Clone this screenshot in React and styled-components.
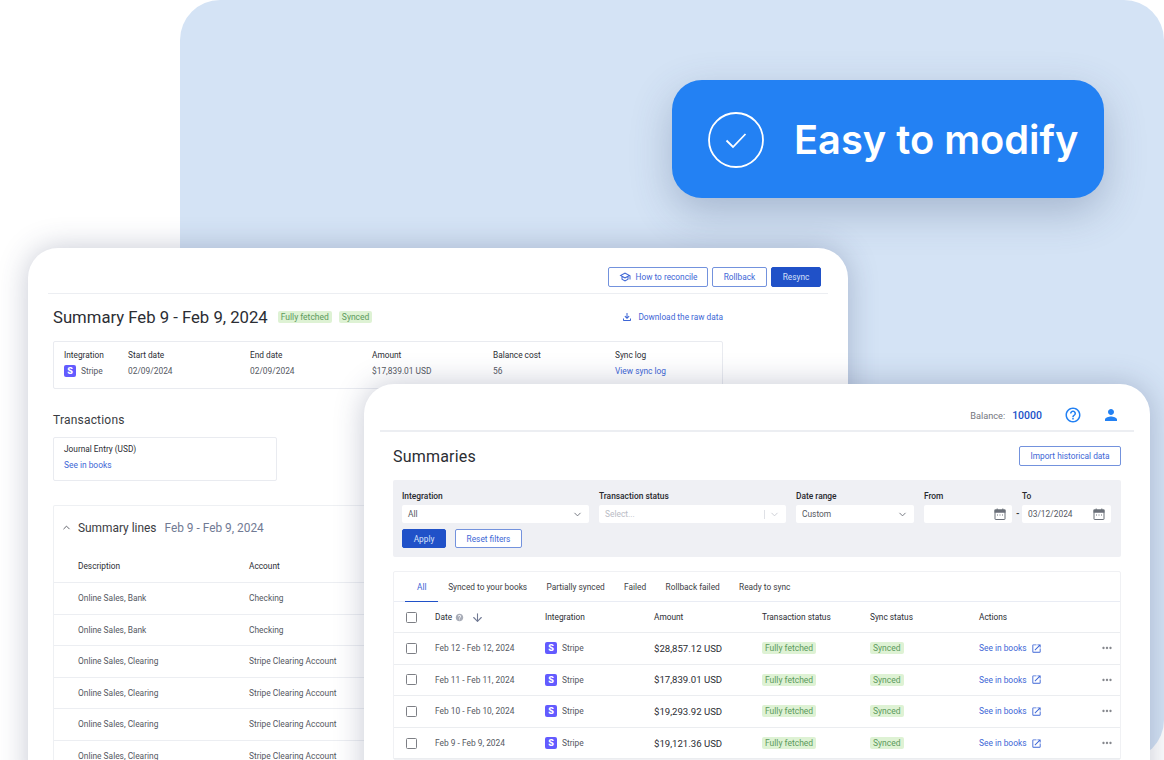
import React from 'react';
import styled, { createGlobalStyle } from 'styled-components';
import { ChevronDown, ChevronUp, ArrowDown } from 'lucide-react';
import { MdOutlineSchool, MdOutlineFileDownload, MdHelpOutline, MdPerson, MdOpenInNew, MdMoreHoriz, MdHelp } from 'react-icons/md';

const GlobalStyle = createGlobalStyle`
    html, body { margin: 0; padding: 0; background: #fff; }
    body { font-family: Roboto, "Liberation Sans", sans-serif; color: #2b2d33; }
    * { box-sizing: border-box; }
`;

const BLUE = '#2051c8';
const LINK = '#3d66d6';

const Canvas = styled.div`
    position: relative;
    width: 1164px;
    height: 760px;
    overflow: hidden;
`;

const Backdrop = styled.div`
    position: absolute;
    left: 180px;
    top: 0;
    width: 984px;
    height: 760px;
    background: #d4e3f5;
    border-radius: 40px;
`;

const Callout = styled.div`
    position: absolute;
    left: 672px;
    top: 80px;
    width: 432px;
    height: 118px;
    display: flex;
    align-items: center;
    gap: 30px;
    padding: 2px 0 0 36px;
    background: #2381f3;
    border-radius: 30px;
    color: #fff;
    font-family: Inter, sans-serif;
    font-size: 39.8px;
    font-weight: 600;
    box-shadow: 0 14px 40px rgba(60, 80, 120, 0.3);
`;

const CalloutText = styled.span`
    margin-top: -2px;
`;

const Window = styled.div`
    position: absolute;
    left: ${p => p.$left}px;
    top: ${p => p.$top}px;
    width: ${p => p.$width}px;
    height: 560px;
    background: #fff;
    border-radius: 30px;
    box-shadow: 0 0 30px rgba(50, 60, 100, 0.28);
`;

const TopBar = styled.div`
    height: ${p => p.$height}px;
    margin: 0 ${p => p.$margin}px;
    padding: 0 ${p => p.$pad}px ${p => p.$bottom}px 0;
    display: flex;
    align-items: flex-end;
    justify-content: flex-end;
    gap: 4px;
    border-bottom: ${p => p.$line}px solid #eceef2;
`;

const Button = styled.button`
    height: ${p => p.$h || 20}px;
    width: ${p => p.$w}px;
    display: inline-flex;
    align-items: center;
    justify-content: center;
    gap: 5px;
    padding: 0;
    font-family: inherit;
    font-size: 8.3px;
    color: ${p => (p.$primary ? '#d6e0fa' : LINK)};
    background: ${p => (p.$primary ? BLUE : '#fff')};
    border: 1px solid ${p => (p.$primary ? BLUE : '#7392dd')};
    border-radius: 2px;
`;

const BackBody = styled.div`
    padding: 13px 0 0 25px;
    width: 695px;
`;

const TitleRow = styled.div`
    display: flex;
    align-items: center;
    height: 20px;
    gap: 7px;
`;

const BackTitle = styled.h1`
    margin: 0 3px 0 0;
    font-size: 16.7px;
    font-weight: 400;
    color: #2b2d33;
    white-space: nowrap;
`;

const Tag = styled.span`
    display: inline-flex;
    align-items: center;
    height: 12px;
    padding: 0 3px;
    background: #def2d4;
    border-radius: 2px;
    color: #5c9a5c;
    font-size: 8.5px;
    white-space: nowrap;
`;

const TagCell = styled.span`
    display: flex;
    align-items: center;
`;

const RawLink = styled.a`
    margin-left: auto;
    display: inline-flex;
    align-items: center;
    gap: 5px;
    color: ${LINK};
    font-size: 8.3px;
`;

const InfoBox = styled.div`
    margin-top: 14px;
    height: 48px;
    padding: 7px 0 0 10px;
    border: 1px solid #e9ebf0;
    border-radius: 2px;
    display: grid;
    grid-template-columns: 64px 122px 122px 121px 122px 1fr;
    grid-template-rows: 12px 20px;
    align-items: center;
`;

const Label = styled.span`
    font-size: 8.3px;
    color: #2b2d33;
    white-space: nowrap;
`;

const Value = styled.span`
    display: inline-flex;
    align-items: center;
    gap: 5px;
    font-size: 8.4px;
    color: #55585f;
    white-space: nowrap;
`;

const Link = styled(Value)`
    color: ${LINK};
`;

const ActionLink = styled(Link)`
    gap: 4px;
`;

const StripeMark = styled.span`
    width: 12px;
    height: 12px;
    display: inline-flex;
    align-items: center;
    justify-content: center;
    background: #635bff;
    border-radius: 2px;
    color: #fff;
    font-size: 9px;
    font-weight: 900;
`;

const SectionTitle = styled.h2`
    margin: 24px 0 10px;
    font-size: 12px;
    line-height: 14px;
    font-weight: 400;
    color: #3a3c42;
    letter-spacing: 0.2px;
`;

const JournalBox = styled.div`
    width: 224px;
    height: 44px;
    padding: 6px 10px;
    display: flex;
    flex-direction: column;
    gap: 6px;
    border: 1px solid #e9ebf0;
    border-radius: 2px;
`;

const LinesBox = styled.div`
    margin-top: 24px;
    border: 1px solid #eef0f3;
    border-bottom: 0;
    border-radius: 2px;
`;

const LinesHead = styled.div`
    height: 43px;
    padding-left: 7px;
    display: flex;
    align-items: center;
    gap: 6px;
    font-size: 11.9px;
    color: #3a3c42;
`;

const LinesRange = styled.span`
    margin-left: 2px;
    color: #717a94;
`;

const LineRow = styled.div`
    height: ${p => (p.$head ? 34 : 31.5)}px;
    padding-left: 24px;
    display: grid;
    grid-template-columns: 171px 1fr;
    align-items: center;
    border-bottom: 1px solid #eceef2;
`;

const FrontBody = styled.div`
    padding: 0 29px;
`;

const Balance = styled.div`
    display: flex;
    align-items: center;
    width: 100%;
    height: 30px;
    justify-content: flex-end;
    font-size: 9.2px;
    color: #74777e;
`;

const BalanceValue = styled.span`
    margin: 0 22px 0 7px;
    color: ${BLUE};
    font-size: 10.5px;
    font-weight: 500;
`;

const UserIcon = styled(MdPerson)`
    margin: 0 14px 0 20px;
`;

const PageHead = styled.div`
    height: 48px;
    display: flex;
    align-items: center;
    justify-content: space-between;
`;

const PageTitle = styled.h1`
    margin: 0;
    font-size: 16px;
    font-weight: 400;
    color: #2b2d33;
    letter-spacing: 0.2px;
`;

const Filters = styled.div`
    height: 77px;
    padding: 10px 9px 0;
    background: #eff0f4;
    border-radius: 2px;
`;

const FilterRow = styled.div`
    display: grid;
    grid-template-columns: 187px 187px 118px 88px 89px;
    column-gap: 10px;
`;

const Field = styled.div`
    display: flex;
    flex-direction: column;
    gap: 3px;
`;

const FieldLabel = styled.span`
    height: 12px;
    font-size: 8.4px;
    font-weight: 500;
    line-height: 12px;
    color: #26282d;
    white-space: nowrap;
`;

const Input = styled.div`
    position: relative;
    height: 18px;
    padding: 0 6px;
    display: flex;
    align-items: center;
    justify-content: space-between;
    background: #fff;
    border-radius: 2px;
    font-size: 8.4px;
    color: ${p => (p.$placeholder ? '#b9bcc5' : '#55585f')};
`;

const Dash = styled.span`
    position: absolute;
    left: -6px;
    top: 3px;
    font-size: 9px;
    font-weight: 700;
    color: #33353a;
`;

const Divider = styled.span`
    width: 1px;
    height: 9px;
    margin-left: auto;
    margin-right: 4px;
    background: #dfe1e6;
`;

const FilterActions = styled.div`
    margin-top: 6px;
    display: flex;
    gap: 9px;
`;

const TableBox = styled.div`
    margin-top: 14px;
    border: 1px solid #f0f1f4;
    border-radius: 2px;
`;

const Tabs = styled.div`
    height: 30px;
    padding-left: 11px;
    display: flex;
    border-bottom: 1px solid #e9ecf4;
`;

const Tab = styled.span`
    height: 30px;
    padding: 0 ${p => p.$pad || 9.7}px;
    display: flex;
    align-items: center;
    font-size: 8.3px;
    color: ${p => (p.$active ? LINK : '#3c3e44')};
    border-bottom: ${p => (p.$active ? `1px solid ${BLUE}` : '0')};
    white-space: nowrap;
`;

const Row = styled.div`
    height: ${p => (p.$head ? 31 : 31.6)}px;
    padding-left: 12px;
    display: grid;
    grid-template-columns: 29px 110px 109px 108px 108px 109px 121px 1fr;
    align-items: center;
    border-bottom: 1px solid #ebedf0;
`;

const Checkbox = styled.span`
    width: 11px;
    height: 11px;
    border: 1px solid #7d7f85;
    border-radius: 1.5px;
    background: #fff;
`;

const Amount = styled.span`
    font-size: 9.6px;
    color: #2b2d33;
    white-space: nowrap;
`;

const HeadCell = styled(Label)`
    display: inline-flex;
    align-items: center;
    gap: 3px;
`;

const SortArrow = styled(ArrowDown)`
    margin-left: 4px;
`;

const Dots = styled(MdMoreHoriz)`
    color: #85878d;
`;

function Calendar() {
    return (
        <svg width="12" height="12" viewBox="0 0 12 12" fill="none" stroke="#6b7079">
            <rect x="1" y="2" width="10" height="9.5" rx="0.5" />
            <rect x="1" y="2" width="10" height="2.2" fill="#6b7079" />
            <path d="M3.2 .5v2M8.8 .5v2" />
            <path d="M3 7h1M5.5 7h1M8 7h1" />
        </svg>
    );
}

const summaryRows = [
    ['Feb 12 - Feb 12, 2024', '$28,857.12 USD'],
    ['Feb 11 - Feb 11, 2024', '$17,839.01 USD'],
    ['Feb 10 - Feb 10, 2024', '$19,293.92 USD'],
    ['Feb 9 - Feb 9, 2024', '$19,121.36 USD'],
];

const lineRows = [
    ['Online Sales, Bank', 'Checking'],
    ['Online Sales, Bank', 'Checking'],
    ['Online Sales, Clearing', 'Stripe Clearing Account'],
    ['Online Sales, Clearing', 'Stripe Clearing Account'],
    ['Online Sales, Clearing', 'Stripe Clearing Account'],
    ['Online Sales, Clearing', 'Stripe Clearing Account'],
];

const tabs = ['Synced to your books', 'Partially synced', 'Failed', 'Rollback failed', 'Ready to sync'];

export default function App() {
    return (
        <Canvas>
            <GlobalStyle />
            <Backdrop />
            <Callout>
                <svg width="56" height="56" viewBox="0 0 56 56" fill="none" stroke="#fff">
                    <circle cx="28" cy="28" r="27" strokeWidth="1.8" />
                    <path d="M18.5 28.5l6.5 6.5 12.5-13" strokeWidth="1.8" />
                </svg>
                <CalloutText>Easy to modify</CalloutText>
            </Callout>

            <Window $left={28} $top={248} $width={820}>
                <TopBar $height={46} $margin={20} $pad={7} $bottom={6} $line={1}>
                    <Button $w={100}><MdOutlineSchool size={12} />How to reconcile</Button>
                    <Button $w={55}>Rollback</Button>
                    <Button $w={50} $primary>Resync</Button>
                </TopBar>
                <BackBody>
                    <TitleRow>
                        <BackTitle>Summary Feb 9 - Feb 9, 2024</BackTitle>
                        <Tag>Fully fetched</Tag>
                        <Tag>Synced</Tag>
                        <RawLink><MdOutlineFileDownload size={12} />Download the raw data</RawLink>
                    </TitleRow>
                    <InfoBox>
                        <Label>Integration</Label>
                        <Label>Start date</Label>
                        <Label>End date</Label>
                        <Label>Amount</Label>
                        <Label>Balance cost</Label>
                        <Label>Sync log</Label>
                        <Value><StripeMark>S</StripeMark>Stripe</Value>
                        <Value>02/09/2024</Value>
                        <Value>02/09/2024</Value>
                        <Value>$17,839.01 USD</Value>
                        <Value>56</Value>
                        <Link>View sync log</Link>
                    </InfoBox>
                    <SectionTitle>Transactions</SectionTitle>
                    <JournalBox>
                        <Label>Journal Entry (USD)</Label>
                        <Link>See in books</Link>
                    </JournalBox>
                    <LinesBox>
                        <LinesHead>
                            <ChevronUp size={11} color="#55585f" />
                            Summary lines
                            <LinesRange>Feb 9 - Feb 9, 2024</LinesRange>
                        </LinesHead>
                        <LineRow $head>
                            <Label>Description</Label>
                            <Label>Account</Label>
                        </LineRow>
                        {lineRows.map((line, i) => (
                            <LineRow key={i}>
                                <Value>{line[0]}</Value>
                                <Value>{line[1]}</Value>
                            </LineRow>
                        ))}
                    </LinesBox>
                </BackBody>
            </Window>

            <Window $left={364} $top={384} $width={786}>
                <TopBar $height={48} $margin={16} $pad={0} $bottom={0} $line={2}>
                    <Balance>
                        Balance:
                        <BalanceValue>10000</BalanceValue>
                        <MdHelpOutline size={18} color="#2381f3" />
                        <UserIcon size={18} color="#2381f3" />
                    </Balance>
                </TopBar>
                <FrontBody>
                    <PageHead>
                        <PageTitle>Summaries</PageTitle>
                        <Button $w={102}>Import historical data</Button>
                    </PageHead>
                    <Filters>
                        <FilterRow>
                            <Field>
                                <FieldLabel>Integration</FieldLabel>
                                <Input>All<ChevronDown size={11} color="#6b7079" /></Input>
                            </Field>
                            <Field>
                                <FieldLabel>Transaction status</FieldLabel>
                                <Input $placeholder>Select...<Divider /><ChevronDown size={11} color="#c9ccd3" /></Input>
                            </Field>
                            <Field>
                                <FieldLabel>Date range</FieldLabel>
                                <Input>Custom<ChevronDown size={11} color="#6b7079" /></Input>
                            </Field>
                            <Field>
                                <FieldLabel>From</FieldLabel>
                                <Input><span /><Calendar /></Input>
                            </Field>
                            <Field>
                                <FieldLabel>To</FieldLabel>
                                <Input><Dash>-</Dash>03/12/2024<Calendar /></Input>
                            </Field>
                        </FilterRow>
                        <FilterActions>
                            <Button $w={44} $h={19} $primary>Apply</Button>
                            <Button $w={67} $h={19}>Reset filters</Button>
                        </FilterActions>
                    </Filters>
                    <TableBox>
                        <Tabs>
                            <Tab $active $pad={12}>All</Tab>
                            {tabs.map(t => <Tab key={t}>{t}</Tab>)}
                        </Tabs>
                        <Row $head>
                            <Checkbox />
                            <HeadCell>Date <MdHelp size={9} color="#a9adb8" /><SortArrow size={13} color="#717a94" /></HeadCell>
                            <Label>Integration</Label>
                            <Label>Amount</Label>
                            <Label>Transaction status</Label>
                            <Label>Sync status</Label>
                            <Label>Actions</Label>
                            <span />
                        </Row>
                        {summaryRows.map(row => (
                            <Row key={row[0]}>
                                <Checkbox />
                                <Value>{row[0]}</Value>
                                <Value><StripeMark>S</StripeMark>Stripe</Value>
                                <Amount>{row[1]}</Amount>
                                <TagCell><Tag>Fully fetched</Tag></TagCell>
                                <TagCell><Tag>Synced</Tag></TagCell>
                                <ActionLink>See in books<MdOpenInNew size={11} /></ActionLink>
                                <Dots size={14} />
                            </Row>
                        ))}
                    </TableBox>
                </FrontBody>
            </Window>
        </Canvas>
    );
}
